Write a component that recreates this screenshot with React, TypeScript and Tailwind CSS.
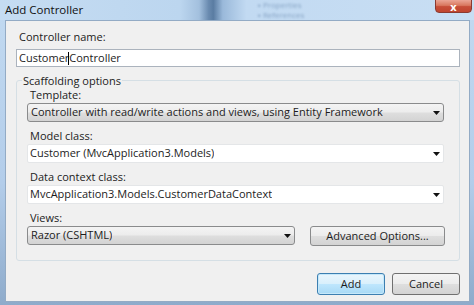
import React from 'react';

function Arrow() {
  return (
    <svg width="7" height="4" viewBox="0 0 7 4" className="shrink-0">
      <polygon points="0,0 7,0 3.5,4" fill="#111" />
    </svg>
  );
}

function Label({ children }: { children: React.ReactNode }) {
  return <div className="h-[15px] pl-[3px] leading-[15px]">{children}</div>;
}

// gray push-button look (Template, Views)
function ButtonCombo({ value, className = '' }: { value: string; className?: string }) {
  return (
    <div
      className={`mt-[1px] flex h-[19px] items-center justify-between rounded-[3px] border border-[#8a8b8c] bg-[linear-gradient(180deg,#f4f4f4_0%,#ececec_48%,#dedede_52%,#d3d3d3_100%)] pl-[3px] pr-[3px] ${className}`}
    >
      <span className="truncate">{value}</span>
      <Arrow />
    </div>
  );
}

// flat white combo (Model class, Data context class)
function WhiteCombo({ value }: { value: string }) {
  return (
    <div className="mt-[1px] flex h-[19px] items-center justify-between rounded-[2px] border border-[#e4e6e8] bg-white pl-[2px] pr-[3px]">
      <span className="truncate">{value}</span>
      <Arrow />
    </div>
  );
}

export default function App() {
  return (
    <div className="relative flex h-[305px] w-[474px] flex-col overflow-hidden bg-[linear-gradient(180deg,#c2daf1_0%,#b3cdea_60%,#8eabcb_100%)] font-['Open_Sans',sans-serif] font-stretch-[88%] text-[11px] text-[#1c1c1c]">
      {/* title bar */}
      <div className="relative flex h-[20px] shrink-0 items-center bg-[linear-gradient(90deg,#c5dcf2_0%,#bcd6ef_38%,#a3c0de_42%,#6a8bb0_44%,#5a7ca2_45%,#9ab9da_47%,#c2daf2_52%,#c8def3_100%)] pl-[5px]">
        <span className="text-[11.5px] text-[#111]">Add Controller</span>
        <div className="absolute left-[258px] top-0 flex flex-col gap-[1px] text-[8px] leading-[9px] text-[#5f7fa6] opacity-60 blur-[1px]">
          <span>▪ Properties</span>
          <span>▪ References</span>
        </div>
        <div className="absolute right-[2px] top-[-1px] flex h-[14px] w-[37px] items-center justify-center rounded-b-[4px] border border-[#8b3a30] bg-[linear-gradient(180deg,#eba595_0%,#d9785f_45%,#c74e38_55%,#c0452f_100%)]">
          <span className="text-[11px] font-bold leading-none text-white">x</span>
        </div>
      </div>

      {/* client area */}
      <div className="mb-[3px] ml-[5px] mr-[4px] flex flex-1 flex-col border border-[#93abc5] bg-[#f0f0f0] pl-[10px] pr-[9px] pt-[8px]">
        <div className="ml-[3px] h-[15px] leading-[15px]">Controller name:</div>
        <div className="mt-[5px] flex h-[18px] items-center border border-[#abb3bd] bg-white px-[2px]">
          <span>Customer</span>
          <span className="-ml-px inline-block h-[13px] w-px bg-black" />
          <span>Controller</span>
        </div>

        <fieldset className="mt-[6px] rounded-[3px] border border-[#d5dfe5]">
          <legend className="ml-[5px] px-[1px] leading-[15px]">Scaffolding options</legend>
          <div className="-mt-px flex flex-col pb-[14px] pl-[10px] pr-[15px]">
            <Label>Template:</Label>
            <ButtonCombo value="Controller with read/write actions and views, using Entity Framework" />

            <div className="mt-[6px]">
              <Label>Model class:</Label>
            </div>
            <WhiteCombo value="Customer (MvcApplication3.Models)" />

            <div className="mt-[6px]">
              <Label>Data context class:</Label>
            </div>
            <WhiteCombo value="MvcApplication3.Models.CustomerDataContext" />

            <div className="mt-[6px]">
              <Label>Views:</Label>
            </div>
            <div className="mt-[1px] flex items-start justify-between">
              <ButtonCombo value="Razor (CSHTML)" className="!mt-0 w-[268px]" />
              <button className="-mr-px h-[20px] w-[135px] rounded-[3px] border border-[#8a8b8c] bg-[linear-gradient(180deg,#f4f4f4_0%,#ececec_48%,#dedede_52%,#d3d3d3_100%)]">
                Advanced Options...
              </button>
            </div>
          </div>
        </fieldset>

        <div className="mt-[12px] flex justify-end gap-[7px]">
          <button className="h-[22px] w-[68px] rounded-[3px] border border-[#3c7fb1] bg-[linear-gradient(180deg,#eaf6fd_0%,#d9f0fc_48%,#bee6fd_52%,#a7d9f5_100%)] shadow-[inset_0_0_0_1px_#c5e8fa]">
            Add
          </button>
          <button className="h-[22px] w-[68px] rounded-[3px] border border-[#707070] bg-[linear-gradient(180deg,#f4f4f4_0%,#ececec_48%,#dedede_52%,#d3d3d3_100%)]">
            Cancel
          </button>
        </div>
      </div>
    </div>
  );
}
